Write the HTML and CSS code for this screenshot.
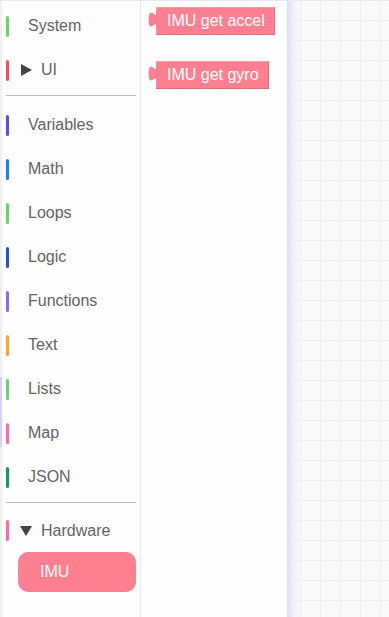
FILE: index.html
```html
<!DOCTYPE html>
<html lang="en">
<head>
    <meta charset="UTF-8">
    <meta name="viewport" content="width=device-width, initial-scale=1.0">
    <title>Blocks</title>
    <link rel="stylesheet" href="styles.css">
</head>
<body>
    <div class="app">
        <div class="toolbox">
            <div class="scroll-thumb"></div>
            <div class="cat"><span class="bar" style="background:#66d466"></span><span class="label">System</span></div>
            <div class="cat"><span class="bar" style="background:#f0505a"></span><span class="arrow-right"></span><span class="label short">UI</span></div>
            <div class="sep"></div>
            <div class="cat"><span class="bar" style="background:#5b4be8"></span><span class="label">Variables</span></div>
            <div class="cat"><span class="bar" style="background:#1a7ff0"></span><span class="label">Math</span></div>
            <div class="cat"><span class="bar" style="background:#66d466"></span><span class="label">Loops</span></div>
            <div class="cat"><span class="bar" style="background:#2451d6"></span><span class="label">Logic</span></div>
            <div class="cat"><span class="bar" style="background:#8a6ae6"></span><span class="label">Functions</span></div>
            <div class="cat"><span class="bar" style="background:#ffa428"></span><span class="label">Text</span></div>
            <div class="cat"><span class="bar" style="background:#66d466"></span><span class="label">Lists</span></div>
            <div class="cat"><span class="bar" style="background:#ff66b6"></span><span class="label">Map</span></div>
            <div class="cat"><span class="bar" style="background:#0e9f55"></span><span class="label">JSON</span></div>
            <div class="sep"></div>
            <div class="cat hw"><span class="bar" style="background:#ff66b6"></span><span class="arrow-down"></span><span class="label short">Hardware</span></div>
            <div class="sub-cat">IMU</div>
        </div>

        <div class="flyout">
            <div class="block">
                <svg class="tab" width="9" height="28" viewBox="0 0 9 28">
                    <path d="M9 5 c0 10 -8 -8 -8 7.5 s8 -2.5 8 7.5 z" fill="#fe7f90" stroke="#e86e7f" stroke-width="0.6"/>
                </svg>
                <span>IMU get accel</span>
            </div>
            <div class="block">
                <svg class="tab" width="9" height="28" viewBox="0 0 9 28">
                    <path d="M9 5 c0 10 -8 -8 -8 7.5 s8 -2.5 8 7.5 z" fill="#fe7f90" stroke="#e86e7f" stroke-width="0.6"/>
                </svg>
                <span>IMU get gyro</span>
            </div>
        </div>

        <div class="workspace"></div>
    </div>
</body>
</html>
```

FILE: styles.css
```css
* {
    box-sizing: border-box;
    margin: 0;
    padding: 0;
}

body {
    font-family: 'Liberation Sans', Arial, sans-serif;
    height: 100vh;
    overflow: hidden;
    background-color: #fafafb;
}

.app {
    display: flex;
    height: 100vh;
    border-top: 1px solid #e9e6f7;
    background-color: #fafafb;
    background-image:
        linear-gradient(to right, #efeff3 1px, transparent 1px),
        linear-gradient(to bottom, #efeff3 1px, transparent 1px);
    background-size: 20px 20px;
    background-position: 0 -1px;
}

.toolbox {
    position: relative;
    width: 141px;
    flex-shrink: 0;
    padding-top: 3px;
    background-color: #fdfdfd;
    border-left: 2px solid #f0f0f0;
    border-right: 1px solid #e8e8e8;
}

.scroll-thumb {
    position: absolute;
    left: -2px;
    top: 376px;
    width: 2px;
    height: 70px;
    background-color: #d8d0f6;
}

.cat {
    display: flex;
    align-items: center;
    height: 44px;
    color: #636363;
    font-size: 16px;
}

.bar {
    width: 3px;
    height: 21px;
    margin-left: 4px;
    border-radius: 2px;
}

.label {
    margin-left: 19px;
}

.label.short {
    margin-left: 9px;
}

.arrow-right {
    width: 0;
    height: 0;
    margin-left: 12px;
    border-top: 6px solid transparent;
    border-bottom: 6px solid transparent;
    border-left: 11px solid #444;
}

.arrow-down {
    width: 0;
    height: 0;
    margin-left: 11px;
    border-left: 6px solid transparent;
    border-right: 6px solid transparent;
    border-top: 10px solid #444;
}

.sep {
    height: 11px;
    padding-top: 3px;
    margin: 0 4px;
}

.sep::before {
    content: "";
    display: block;
    height: 1px;
    background-color: #bdbdbd;
}

.cat.hw {
    height: 41px;
}

.sub-cat {
    margin: 1px 4px 0 16px;
    height: 40px;
    line-height: 40px;
    padding-left: 22px;
    border-radius: 10px;
    background-color: #fe7f90;
    color: #fff;
    font-size: 16px;
}

.flyout {
    width: 146px;
    flex-shrink: 0;
    padding: 6px 0 0 15px;
    background-color: rgba(255, 255, 255, 0.82);
}

.block {
    position: relative;
    display: inline-block;
    height: 28px;
    line-height: 28px;
    padding: 0 10px 0 11px;
    margin-bottom: 26px;
    background-color: #fe7f90;
    color: #fff;
    font-size: 16px;
    white-space: nowrap;
    box-shadow: inset -1px -1px 0 #e56c7d, inset 1px 1px 0 #ff98a6;
}

.tab {
    position: absolute;
    left: -8px;
    top: 0;
}

.workspace {
    flex: 1;
    background-image: linear-gradient(to right, rgba(220, 214, 242, 0.9), rgba(230, 226, 246, 0.5) 6px, rgba(240, 238, 250, 0) 13px);
}
```
